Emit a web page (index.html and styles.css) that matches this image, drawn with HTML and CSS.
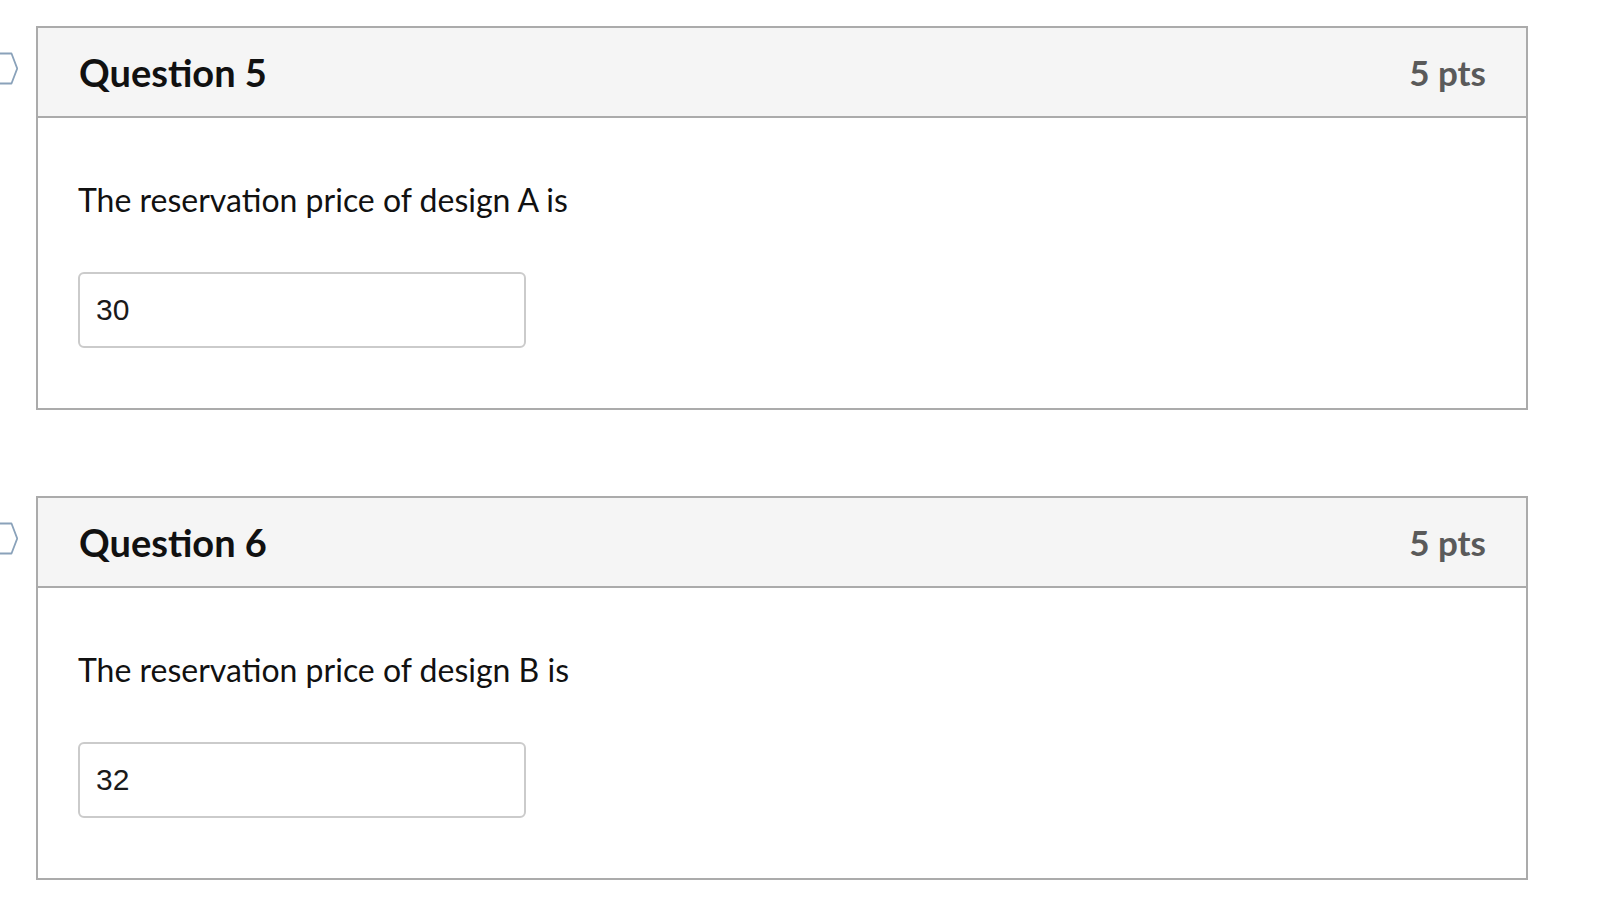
FILE: index.html
```html
<!DOCTYPE html>
<html lang="en">
<head>
<meta charset="utf-8">
<title>Quiz</title>
<link rel="stylesheet" href="styles.css">
</head>
<body>
<div class="page">
  <div class="question-row">
    <svg class="flag" width="18" height="34" viewBox="0 0 18 34" aria-hidden="true">
      <path d="M-4 1.5 H11.5 L17.2 16.5 L11.5 31.5 H-4" fill="none" stroke="#8aa2ba" stroke-width="1.8" stroke-linejoin="round"/>
    </svg>
    <div class="card">
      <div class="card-header">
        <h2 class="q-title">Question 5</h2>
        <span class="q-points">5 pts</span>
      </div>
      <div class="card-body">
        <p class="q-text">The reservation price of design A is</p>
        <input class="q-input" type="text" value="30">
      </div>
    </div>
  </div>
  <div class="question-row">
    <svg class="flag" width="18" height="34" viewBox="0 0 18 34" aria-hidden="true">
      <path d="M-4 1.5 H11.5 L17.2 16.5 L11.5 31.5 H-4" fill="none" stroke="#8aa2ba" stroke-width="1.8" stroke-linejoin="round"/>
    </svg>
    <div class="card">
      <div class="card-header">
        <h2 class="q-title">Question 6</h2>
        <span class="q-points">5 pts</span>
      </div>
      <div class="card-body">
        <p class="q-text">The reservation price of design B is</p>
        <input class="q-input" type="text" value="32">
      </div>
    </div>
  </div>
</div>
</body>
</html>
```

FILE: styles.css
```css
html, body {
  margin: 0;
  padding: 0;
  background: #ffffff;
}

body {
  font-family: Lato, "Open Sans", "Liberation Sans", sans-serif;
  color: #111;
}

.page {
  padding-top: 26px;
  display: flex;
  flex-direction: column;
  gap: 86px;
}

.question-row {
  display: flex;
  align-items: flex-start;
}

.flag {
  flex: none;
  margin-top: 26px;
  margin-right: 18px;
}

.card {
  box-sizing: border-box;
  width: 1492px;
  border: 2px solid #ababab;
  background: #fff;
}

.card-header {
  box-sizing: border-box;
  height: 90px;
  display: flex;
  align-items: center;
  justify-content: space-between;
  padding: 0 40px 0 41px;
  background: #f5f5f5;
  border-bottom: 2px solid #ababab;
}

.q-title {
  margin: 0;
  font-size: 38px;
  font-weight: 700;
  color: #111;
}

.q-points {
  font-size: 35px;
  font-weight: 700;
  color: #5a5a5a;
}

.card-body {
  padding: 62px 40px 60px 40px;
}

.q-text {
  margin: 0 0 53px 0;
  font-size: 32px;
  line-height: 39px;
  color: #111;
}

.q-input {
  display: block;
  box-sizing: border-box;
  width: 448px;
  height: 76px;
  margin: 0;
  padding: 0 16px;
  border: 2px solid #cbcbcb;
  border-radius: 6px;
  font-family: "Liberation Sans", Arial, sans-serif;
  font-size: 30px;
  color: #1a1a1a;
  background: #fff;
  outline: none;
}
```
